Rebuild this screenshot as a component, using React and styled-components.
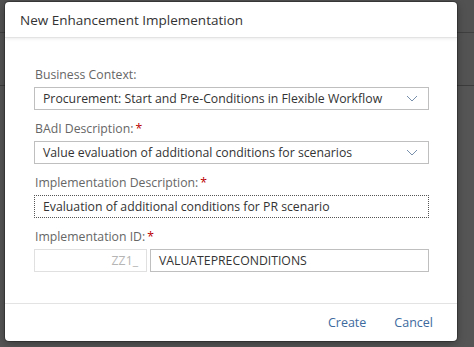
import React from 'react';
import styled, { createGlobalStyle } from 'styled-components';

const GlobalStyle = createGlobalStyle`
    html, body {
        margin: 0;
        padding: 0;
        background: #4f4f50;
    }
    body {
        font-family: "Open Sans", "Noto Sans", sans-serif;
    }
`;

const Backdrop = styled.div`
    width: 474px;
    height: 347px;
    box-sizing: border-box;
    padding: 2px 17px 6px 5px;
    background: linear-gradient(to bottom, #525253 0, #525253 32px, #3f3f40 32px, #3f3f40 33px, #535354 33px, #535354 85px, #3c3c3d 85px, #3c3c3d 86px, #555556 86px);
    overflow: hidden;
`;

const Dialog = styled.div`
    display: flex;
    flex-direction: column;
    height: 100%;
    background: #ffffff;
    border-radius: 4px;
    box-shadow: 0 0 0 1px rgba(0, 0, 0, 0.25), 0 2px 8px rgba(0, 0, 0, 0.35);
    overflow: hidden;
`;

const Header = styled.div`
    display: flex;
    align-items: center;
    height: 35px;
    padding-left: 15px;
    border-bottom: 1px solid #e3e3e3;
    box-shadow: 0 1px 3px rgba(0, 0, 0, 0.08);
    font-size: 13.5px;
    color: #333333;
`;

const Body = styled.div`
    flex: 1;
    display: flex;
    flex-direction: column;
    gap: 11px;
    padding: 29px 28px 0 29px;
`;

const Field = styled.div`
    display: flex;
    flex-direction: column;
    gap: 4px;
`;

const Label = styled.label`
    height: 16px;
    line-height: 16px;
    font-size: 12.25px;
    color: #666666;
    padding-left: 1px;

    span {
        color: #bb0000;
        margin-left: 2px;
    }
`;

const Box = styled.div`
    display: flex;
    align-items: center;
    box-sizing: border-box;
    height: 23px;
    flex: ${props => props.grow ? 1 : 'none'};
    width: ${props => props.width ? props.width : 'auto'};
    padding: 0 8px;
    background: #ffffff;
    border: 1px ${props => props.focused ? 'dotted #555555' : 'solid #bfbfbf'};
    border-color: ${props => props.faded ? '#e0e0e0' : undefined};
    justify-content: ${props => props.faded ? 'flex-end' : 'space-between'};
    font-size: 12.25px;
    color: ${props => props.faded ? '#b5b5b5' : '#333333'};
    white-space: nowrap;
`;

const Row = styled.div`
    display: flex;
    gap: 3px;
`;

const Chevron = styled.svg`
    width: 12px;
    height: 7px;
    margin-right: 2px;
`;

const Footer = styled.div`
    display: flex;
    justify-content: flex-end;
    align-items: center;
    gap: 12px;
    height: 37px;
    padding-right: 16px;
    border-top: 1px solid #e3e3e3;
`;

const Button = styled.button`
    background: none;
    border: none;
    padding: 4px 8px;
    font-family: inherit;
    font-size: 12.5px;
    color: #3d6a9e;
    cursor: pointer;
`;

const Select = ({ value }) => (
    <Box>
        {value}
        <Chevron viewBox="0 0 12 7">
            <polyline points="1,1 6,6 11,1" fill="none" stroke="#7890ab" strokeWidth="1" />
        </Chevron>
    </Box>
);

const App = () => {
    return <Backdrop>
        <GlobalStyle />
        <Dialog>
            <Header>New Enhancement Implementation</Header>
            <Body>
                <Field>
                    <Label>Business Context:</Label>
                    <Select value="Procurement: Start and Pre-Conditions in Flexible Workflow" />
                </Field>
                <Field>
                    <Label>BAdI Description:<span>*</span></Label>
                    <Select value="Value evaluation of additional conditions for scenarios" />
                </Field>
                <Field>
                    <Label>Implementation Description:<span>*</span></Label>
                    <Box focused>Evaluation of additional conditions for PR scenario</Box>
                </Field>
                <Field>
                    <Label>Implementation ID:<span>*</span></Label>
                    <Row>
                        <Box faded width="113px">ZZ1_</Box>
                        <Box grow>VALUATEPRECONDITIONS</Box>
                    </Row>
                </Field>
            </Body>
            <Footer>
                <Button>Create</Button>
                <Button>Cancel</Button>
            </Footer>
        </Dialog>
    </Backdrop>
}

export default App;
